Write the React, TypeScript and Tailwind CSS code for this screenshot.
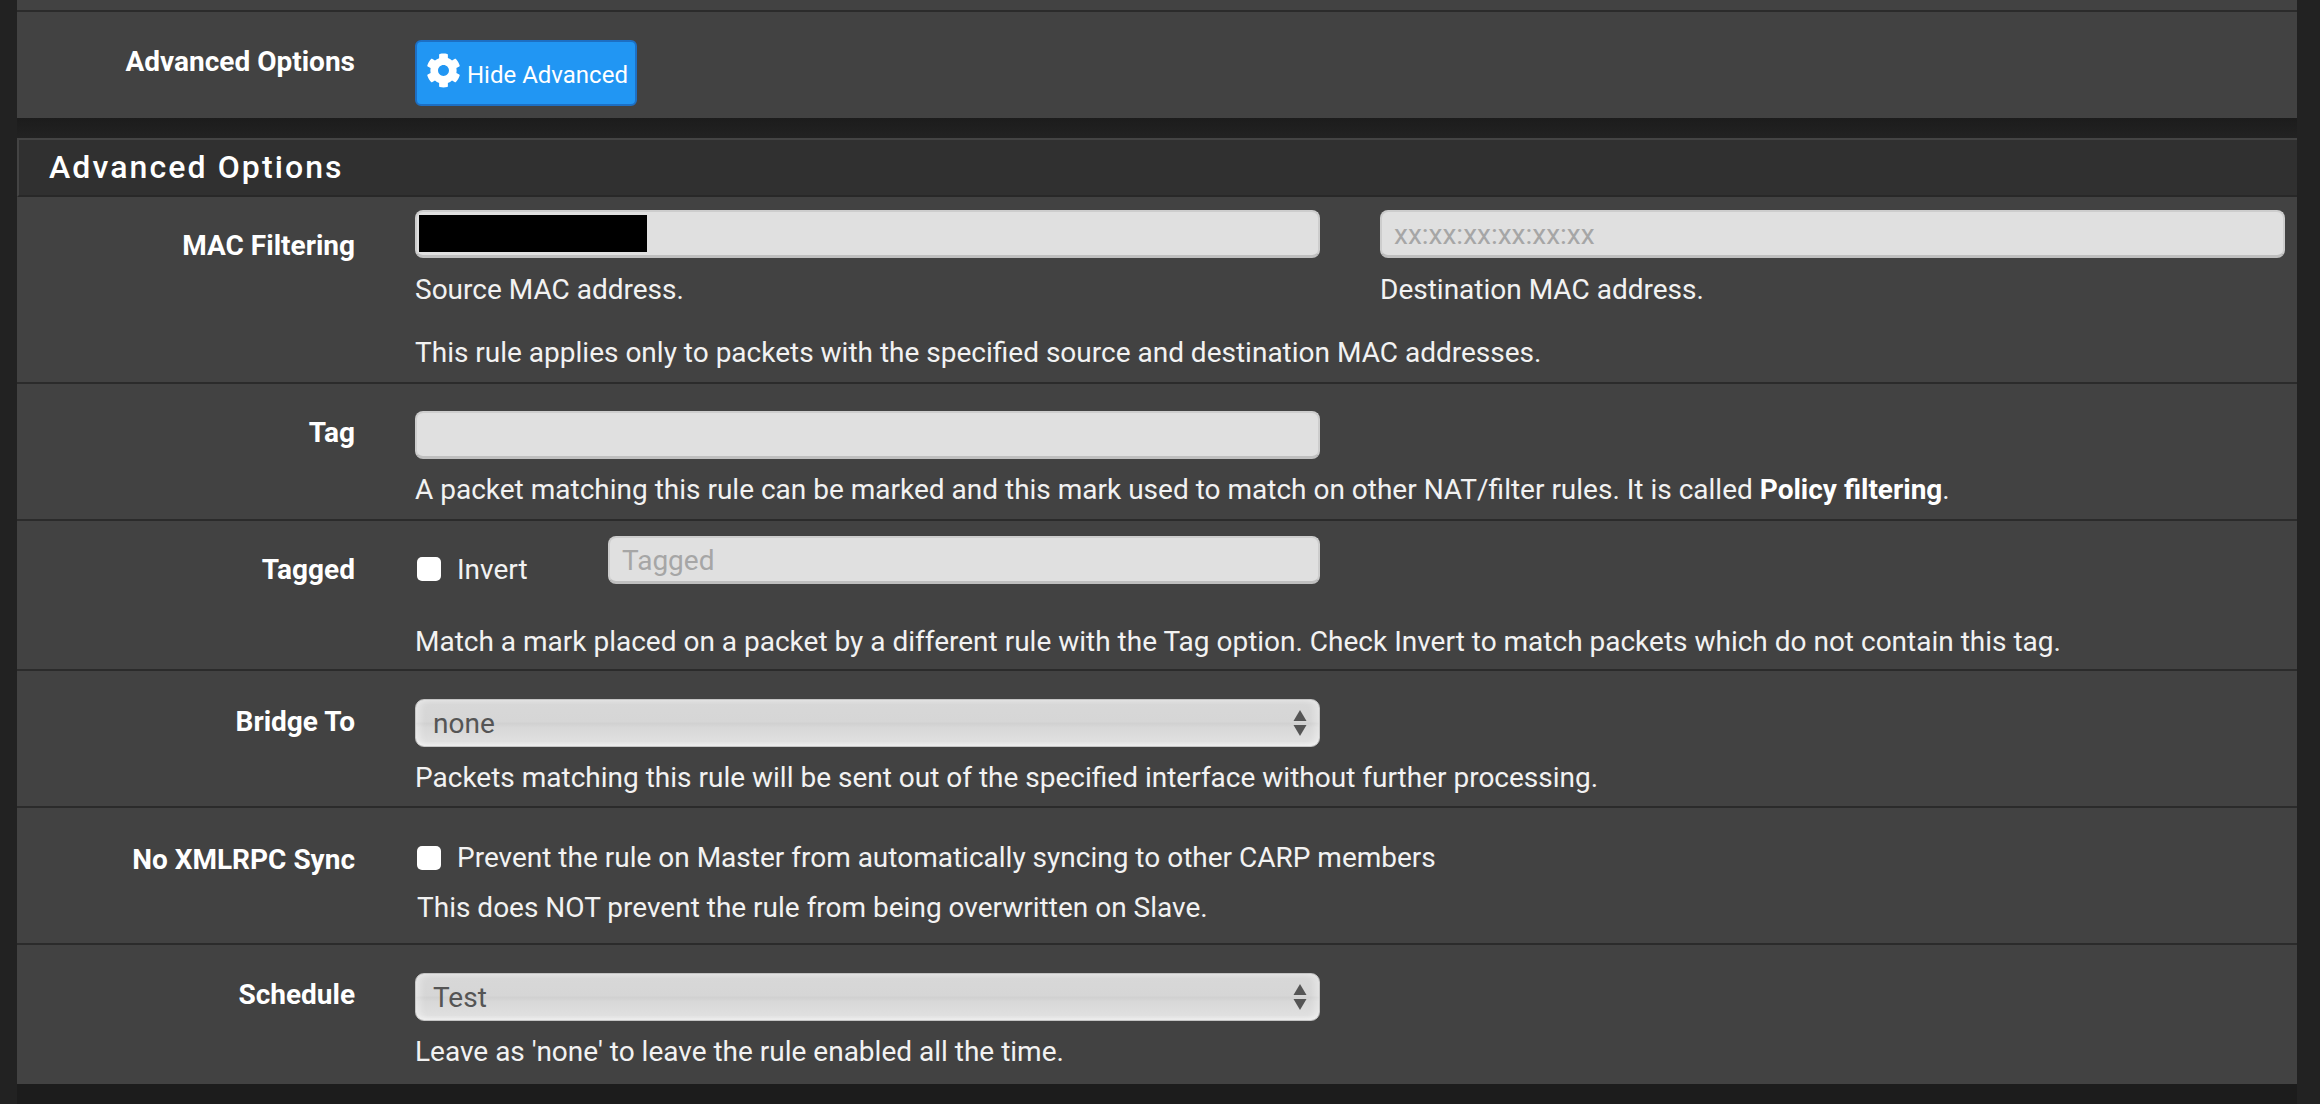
import { FaCog } from "react-icons/fa";

const labelCls = "w-[338px] shrink-0 text-right font-bold text-[28px] leading-[32px] text-white";
const helpCls = "text-[28px] leading-[32px] text-[#f2f2f2]";
const inputCls =
  "h-[48px] rounded-[8px] border-2 border-b-[3px] border-[#cdcdcd] border-b-[#bfbfbf] bg-[#e0e0e0] px-[12px] pt-[2px] text-[28px] text-[#555] placeholder:text-[#a6a6a6] outline-none";

const Updown = () => (
  <svg width="14" height="27" viewBox="0 0 14 27" className="pointer-events-none absolute right-[13px] top-[11px]">
    <path d="M7 0 L13.5 11 L0.5 11 Z" fill="#555" />
    <path d="M7 26 L13.5 15 L0.5 15 Z" fill="#555" />
  </svg>
);

const Select = ({ value }: { value: string }) => (
  <div className="relative w-[905px]">
    <select
      defaultValue={value}
      className="h-[48px] w-full appearance-none rounded-[9px] border border-[#c4c4c4] bg-[linear-gradient(#d8d8d8_0%,#d6d6d6_48%,#d0d0d0_50%,#d8d8d8_60%,#e2e2e2_100%)] pl-[17px] pt-[2px] text-[28px] text-[#555] shadow-[inset_5px_0_6px_rgba(255,255,255,0.3),inset_-5px_0_6px_rgba(255,255,255,0.3),inset_0_-3px_3px_rgba(255,255,255,0.2)] outline-none"
    >
      <option>{value}</option>
    </select>
    <Updown />
  </div>
);

const Check = ({ className }: { className?: string }) => (
  <span className={"ml-[2px] h-[24px] w-[24px] shrink-0 rounded-[5px] bg-white " + (className ?? "")} />
);

const App = () => {
  return (
    <div className="h-[1104px] w-[2320px] overflow-hidden bg-[#222222] pl-[17px] pr-[23px] font-['Roboto',sans-serif]">
      <div className="h-[10px] bg-[#424242]" />
      <div className="flex h-[108px] border-t-2 border-[#2b2b2b] bg-[#424242]">
        <div className={labelCls + " pt-[34px]"}>Advanced Options</div>
        <div className="ml-[60px] pt-[28px]">
          <button className="flex h-[66px] w-[222px] items-center rounded-[6px] border-2 border-[#1d6fc4] bg-[#2196f3] pl-[9px] text-[24px] text-white">
            <FaCog className="mb-[6px] h-[35px] w-[35px]" />
            <span className="ml-[6px] pt-[3px]">Hide Advanced</span>
          </button>
        </div>
      </div>

      <div className="h-[20px] bg-[linear-gradient(#1c1c1c,#222222)]" />

      <div className="flex h-[59px] items-center border-t-2 border-b-2 border-l-2 border-[#444444] border-b-[#282828] bg-[#303030] pb-[2px] pl-[30px] text-[32px] font-medium tracking-[2.1px] text-white">
        Advanced Options
      </div>

      <div className="divide-y-2 divide-[#2b2b2b] bg-[#424242]">
        <div className="flex h-[187px] pt-[13px]">
          <div className={labelCls + " pt-[20px]"}>MAC Filtering</div>
          <div className="ml-[60px] flex flex-1 flex-col">
            <div className="flex gap-[60px]">
              <div className="w-[905px]">
                <div className="relative">
                  <input className={inputCls + " w-full"} />
                  <span className="absolute left-[4px] top-[5px] h-[37px] w-[228px] bg-black" />
                </div>
                <p className={helpCls + " mt-[16px]"}>Source MAC address.</p>
              </div>
              <div className="w-[905px]">
                <input className={inputCls + " w-full"} placeholder="xx:xx:xx:xx:xx:xx" />
                <p className={helpCls + " mt-[16px]"}>Destination MAC address.</p>
              </div>
            </div>
            <p className={helpCls + " mt-[31px]"}>
              This rule applies only to packets with the specified source and destination MAC addresses.
            </p>
          </div>
        </div>

        <div className="flex h-[137px] pt-[27px]">
          <div className={labelCls + " pt-[6px]"}>Tag</div>
          <div className="ml-[60px]">
            <input className={inputCls + " w-[905px]"} />
            <p className={helpCls + " mt-[15px]"}>
              A packet matching this rule can be marked and this mark used to match on other NAT/filter rules. It is
              called <b className="font-bold text-white">Policy filtering</b>.
            </p>
          </div>
        </div>

        <div className="flex h-[150px] pt-[15px]">
          <div className={labelCls + " pt-[18px]"}>Tagged</div>
          <div className="ml-[60px]">
            <div className="flex w-[905px] items-start">
              <Check className="mt-[21px]" />
              <span className={helpCls + " ml-[16px] mt-[18px]"}>Invert</span>
              <input className={inputCls + " ml-auto w-[712px]"} placeholder="Tagged" />
            </div>
            <p className={helpCls + " mt-[40px]"}>
              Match a mark placed on a packet by a different rule with the Tag option. Check Invert to match packets
              which do not contain this tag.
            </p>
          </div>
        </div>

        <div className="flex h-[137px] pt-[28px]">
          <div className={labelCls + " pt-[7px]"}>Bridge To</div>
          <div className="ml-[60px]">
            <Select value="none" />
            <p className={helpCls + " mt-[15px]"}>
              Packets matching this rule will be sent out of the specified interface without further processing.
            </p>
          </div>
        </div>

        <div className="flex h-[137px] pt-[34px]">
          <div className={labelCls + " pt-[2px]"}>No XMLRPC Sync</div>
          <div className="ml-[60px]">
            <div className="flex items-center">
              <Check />
              <span className={helpCls + " ml-[16px]"}>
                Prevent the rule on Master from automatically syncing to other CARP members
              </span>
            </div>
            <p className={helpCls + " mt-[18px] ml-[2px]"}>This does NOT prevent the rule from being overwritten on Slave.</p>
          </div>
        </div>

        <div className="flex h-[139px] pt-[28px]">
          <div className={labelCls + " pt-[6px]"}>Schedule</div>
          <div className="ml-[60px]">
            <Select value="Test" />
            <p className={helpCls + " mt-[15px]"}>Leave as 'none' to leave the rule enabled all the time.</p>
          </div>
        </div>
      </div>

      <div className="h-[24px] bg-[#1c1c1c]" />
    </div>
  );
};

export default App;
